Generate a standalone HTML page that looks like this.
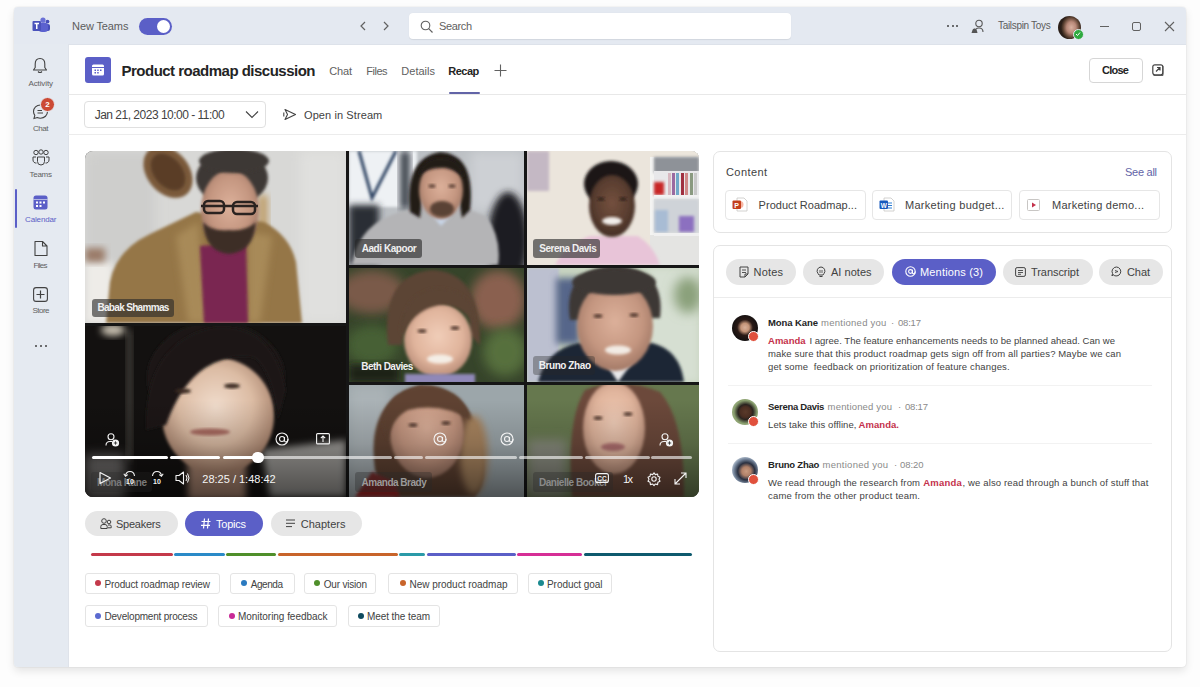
<!DOCTYPE html>
<html><head><meta charset="utf-8"><style>
html,body{margin:0;padding:0;}
body{width:1200px;height:687px;overflow:hidden;position:relative;background:#fdfdfd;font-family:"Liberation Sans",sans-serif;}
svg{overflow:visible}
</style></head><body>
<div style="position:absolute;left:14px;top:7px;width:1172px;height:660px;background:#fff;border-radius:4px;box-shadow:0 4px 8px rgba(0,0,0,0.10),0 0 1.5px rgba(0,0,0,0.14);"></div>
<div style="position:absolute;left:14px;top:7px;width:1172px;height:37px;background:#e4e9f1;border-radius:4px 4px 0 0;"></div>
<div style="position:absolute;left:14px;top:43.5px;width:1172px;height:1px;background:#dde2ea;"></div>
<div style="position:absolute;left:14px;top:44px;width:54px;height:623px;background:#e5eaf1;border-radius:0 0 0 4px;"></div>
<div style="position:absolute;left:67.5px;top:44px;width:1px;height:623px;background:#dfe3ea;"></div>
<svg style="position:absolute;left:30px;top:17px;" width="20" height="17" viewBox="0 0 20 17"><circle cx="17.5" cy="4.6" r="1.9" fill="#464eb8"/><rect x="15" y="7" width="5" height="7" rx="2" fill="#464eb8"/><circle cx="13" cy="3" r="2.6" fill="#6a70d6"/><rect x="8.5" y="5.5" width="9.5" height="9.5" rx="3.5" fill="#5b61cf"/><rect x="2.5" y="4" width="8.5" height="10" rx="1" fill="#4a52bb"/><path d="M4.5 6.5 H9 M6.75 6.5 V12" stroke="#fff" stroke-width="1.5"/></svg>
<div style="position:absolute;left:72.10px;top:21.48px;font-size:11px;line-height:1;font-weight:400;color:#5c5c5c;letter-spacing:-0.121px;white-space:pre;">New Teams</div>
<div style="position:absolute;left:139px;top:17.5px;width:33px;height:17px;background:#5b5fc7;border-radius:9px;"></div>
<div style="position:absolute;left:157px;top:19.5px;width:13px;height:13px;background:#fff;border-radius:50%;"></div>
<svg style="position:absolute;left:359px;top:21px;" width="8" height="10" viewBox="0 0 8 10"><path d="M6 1 L2 5 L6 9" stroke="#616161" stroke-width="1.2" fill="none"/></svg>
<svg style="position:absolute;left:382px;top:21px;" width="8" height="10" viewBox="0 0 8 10"><path d="M2 1 L6 5 L2 9" stroke="#616161" stroke-width="1.2" fill="none"/></svg>
<div style="position:absolute;left:409px;top:13px;width:382px;height:26px;background:#fff;border-radius:4px;box-shadow:0 0.5px 1px rgba(0,0,0,0.08);"></div>
<svg style="position:absolute;left:420px;top:19.5px;" width="14" height="14" viewBox="0 0 14 14"><circle cx="5.5" cy="5.5" r="4.3" stroke="#616161" stroke-width="1.1" fill="none"/><path d="M8.7 8.7 L12.5 12.5" stroke="#616161" stroke-width="1.2"/></svg>
<div style="position:absolute;left:439.00px;top:21.18px;font-size:11px;line-height:1;font-weight:400;color:#616161;letter-spacing:-0.372px;white-space:pre;">Search</div>
<div style="position:absolute;left:947px;top:25px;width:2px;height:2px;background:#424242;border-radius:50%;"></div>
<div style="position:absolute;left:951.5px;top:25px;width:2px;height:2px;background:#424242;border-radius:50%;"></div>
<div style="position:absolute;left:956px;top:25px;width:2px;height:2px;background:#424242;border-radius:50%;"></div>
<svg style="position:absolute;left:970px;top:19px;" width="16" height="16" viewBox="0 0 16 16"><circle cx="9" cy="4.5" r="3.2" stroke="#555" stroke-width="1.1" fill="none"/><path d="M5 13 Q5 9 9 9 Q13 9 13 13" stroke="#555" stroke-width="1.1" fill="none"/><path d="M1.5 14 L2.5 11 Q3 9 5 9.5 Q7 10 7 12 L7.5 14 Z" fill="#555"/></svg>
<div style="position:absolute;left:998.00px;top:21.33px;font-size:10px;line-height:1;font-weight:400;color:#5c5c5c;letter-spacing:-0.318px;white-space:pre;">Tailspin Toys</div>
<div style="position:absolute;left:1058px;top:15.5px;width:23px;height:23px;border-radius:50%;background:radial-gradient(ellipse 45% 55% at 58% 50%,#d8b0a0 0,#b88878 45%,#5a4030 80%,#2a1e18 100%);"></div>
<div style="position:absolute;left:1073px;top:29px;width:9px;height:9px;background:#2eaa3f;border-radius:50%;border:1px solid #e4e9f1;"></div>
<svg style="position:absolute;left:1074.5px;top:30.5px;" width="6" height="6" viewBox="0 0 6 6"><path d="M1 3 L2.5 4.5 L5 1.5" stroke="#fff" stroke-width="1" fill="none"/></svg>
<div style="position:absolute;left:1099.5px;top:25.5px;width:9px;height:1px;background:#616161;"></div>
<div style="position:absolute;left:1132px;top:21.5px;width:9px;height:9px;border:1.1px solid #616161;border-radius:2px;box-sizing:border-box;"></div>
<svg style="position:absolute;left:1164px;top:21px;" width="11" height="11" viewBox="0 0 11 11"><path d="M1 1 L10 10 M10 1 L1 10" stroke="#616161" stroke-width="1.1"/></svg>
<div style="position:absolute;left:68px;top:93.5px;width:1118px;height:1px;background:#e8e8e8;"></div>
<div style="position:absolute;left:85px;top:57px;width:26px;height:25.5px;background:#5b5fc7;border-radius:3px;"></div>
<svg style="position:absolute;left:91px;top:63px;" width="14" height="14" viewBox="0 0 14 14"><rect x="1" y="1.5" width="12" height="11" rx="1.5" fill="#fff"/><rect x="1" y="4" width="12" height="1" fill="#5b5fc7"/><g fill="#5b5fc7"><rect x="3.5" y="6.5" width="1.5" height="1.5"/><rect x="6.2" y="6.5" width="1.5" height="1.5"/><rect x="9" y="6.5" width="1.5" height="1.5"/><rect x="3.5" y="9" width="1.5" height="1.5"/><rect x="6.2" y="9" width="1.5" height="1.5"/></g></svg>
<div style="position:absolute;left:121.50px;top:63.09px;font-size:15px;line-height:1;font-weight:700;color:#242424;letter-spacing:-0.509px;white-space:pre;">Product roadmap discussion</div>
<div style="position:absolute;left:329.20px;top:65.88px;font-size:11px;line-height:1;font-weight:400;color:#616161;letter-spacing:-0.150px;white-space:pre;">Chat</div>
<div style="position:absolute;left:366.30px;top:65.88px;font-size:11px;line-height:1;font-weight:400;color:#616161;letter-spacing:-0.509px;white-space:pre;">Files</div>
<div style="position:absolute;left:401.30px;top:65.88px;font-size:11px;line-height:1;font-weight:400;color:#616161;letter-spacing:0.012px;white-space:pre;">Details</div>
<div style="position:absolute;left:448.30px;top:65.88px;font-size:11px;line-height:1;font-weight:700;color:#242424;letter-spacing:-0.533px;white-space:pre;">Recap</div>
<div style="position:absolute;left:448.5px;top:92px;width:31.5px;height:2px;background:#6264a7;border-radius:1px;"></div>
<svg style="position:absolute;left:494px;top:64px;" width="13" height="13" viewBox="0 0 13 13"><path d="M6.5 0.5 V12.5 M0.5 6.5 H12.5" stroke="#616161" stroke-width="1.1"/></svg>
<div style="position:absolute;left:1088.5px;top:57.5px;width:54px;height:25.5px;border:1px solid #d6d6d6;border-radius:4px;box-sizing:border-box;background:#fff;"></div>
<div style="position:absolute;left:1102.00px;top:65.18px;font-size:11px;line-height:1;font-weight:700;color:#242424;letter-spacing:-0.742px;white-space:pre;">Close</div>
<svg style="position:absolute;left:1152px;top:64px;" width="12" height="12" viewBox="0 0 12 12"><rect x="0.8" y="0.8" width="10" height="10" rx="2" stroke="#424242" stroke-width="1.2" fill="none"/><path d="M4 7.5 L8 3.5 M5 3.5 H8 V6.5" stroke="#424242" stroke-width="1.2" fill="none"/><path d="M1.5 11.5 H11 V2" stroke="#424242" stroke-width="0.8" fill="none"/></svg>
<div style="position:absolute;left:84px;top:101px;width:181.5px;height:26.5px;border:1px solid #e0e0e0;border-radius:4px;box-sizing:border-box;"></div>
<div style="position:absolute;left:94.70px;top:108.64px;font-size:12px;line-height:1;font-weight:400;color:#424242;letter-spacing:-0.502px;white-space:pre;">Jan 21, 2023 10:00 - 11:00</div>
<svg style="position:absolute;left:245px;top:110px;" width="14" height="9" viewBox="0 0 14 9"><path d="M1 1.5 L7 7.5 L13 1.5" stroke="#424242" stroke-width="1.1" fill="none"/></svg>
<svg style="position:absolute;left:283px;top:107.5px;" width="14" height="13" viewBox="0 0 14 13"><path d="M2 1.5 L12.5 6.5 L2 11.5 L4.5 6.5 Z M0.8 4.5 V8.5" stroke="#424242" stroke-width="1.1" fill="none" stroke-linejoin="round"/></svg>
<div style="position:absolute;left:304.00px;top:109.88px;font-size:11px;line-height:1;font-weight:400;color:#424242;letter-spacing:0.096px;white-space:pre;">Open in Stream</div>
<div style="position:absolute;left:68px;top:133.5px;width:1118px;height:1px;background:#ececec;"></div>
<svg style="position:absolute;left:32px;top:57px;" width="16" height="17" viewBox="0 0 16 17"><path d="M8 1.5 C4.5 1.5 3.2 4.2 3.2 7 V10.5 L1.5 13 H14.5 L12.8 10.5 V7 C12.8 4.2 11.5 1.5 8 1.5 Z" stroke="#424242" stroke-width="1.1" fill="none" stroke-linejoin="round"/><path d="M6 14.5 Q8 16.5 10 14.5" stroke="#424242" stroke-width="1.1" fill="none"/></svg>
<div style="position:absolute;left:28.50px;top:79.72px;font-size:8px;line-height:1;font-weight:400;color:#616161;letter-spacing:-0.121px;white-space:pre;">Activity</div>
<svg style="position:absolute;left:32px;top:103px;" width="17" height="17" viewBox="0 0 17 17"><path d="M8.5 2 C4.5 2 1.5 4.8 1.5 8.5 C1.5 10 2 11.2 2.8 12.3 L2 15.5 L5.3 14.5 C6.3 15 7.4 15.2 8.5 15.2 C12.5 15.2 15.5 12.2 15.5 8.5" stroke="#424242" stroke-width="1.1" fill="none"/><path d="M5.5 7.5 H10 M5.5 10 H11" stroke="#424242" stroke-width="1.1"/></svg>
<div style="position:absolute;left:40px;top:97px;width:13px;height:13px;border-radius:50%;background:#cc4a35;border:1px solid #e5eaf1;color:#fff;font-size:8px;font-weight:bold;line-height:13px;text-align:center;font-family:'Liberation Sans'">2</div>
<div style="position:absolute;left:33.00px;top:124.72px;font-size:8px;line-height:1;font-weight:400;color:#616161;letter-spacing:-0.469px;white-space:pre;">Chat</div>
<svg style="position:absolute;left:31.5px;top:149px;" width="18" height="17" viewBox="0 0 18 17"><circle cx="4" cy="3.5" r="2.2" stroke="#424242" stroke-width="1" fill="none"/><circle cx="9" cy="3" r="2.2" stroke="#424242" stroke-width="1" fill="none"/><circle cx="14" cy="3.5" r="2.2" stroke="#424242" stroke-width="1" fill="none"/><path d="M5.5 8 H12.5 V12.5 A3.5 3.5 0 0 1 5.5 12.5 Z" stroke="#424242" stroke-width="1" fill="none"/><path d="M4 8 H1 V11 A3 3 0 0 0 4.5 14 M14 8 H17 V11 A3 3 0 0 1 13.5 14" stroke="#424242" stroke-width="1" fill="none"/></svg>
<div style="position:absolute;left:29.50px;top:170.52px;font-size:8px;line-height:1;font-weight:400;color:#616161;letter-spacing:-0.266px;white-space:pre;">Teams</div>
<div style="position:absolute;left:15px;top:189px;width:2px;height:39px;background:#5b5fc7;border-radius:1px;"></div>
<svg style="position:absolute;left:33px;top:195px;" width="15" height="15" viewBox="0 0 15 15"><rect x="0.5" y="0.5" width="14" height="14" rx="2.5" fill="#5b5fc7"/><rect x="0.5" y="4" width="14" height="1" fill="#ebeef4" opacity="0.6"/><g fill="#fff"><rect x="3" y="6.5" width="2" height="2"/><rect x="6.5" y="6.5" width="2" height="2"/><rect x="10" y="6.5" width="2" height="2"/><rect x="3" y="10" width="2" height="2"/><rect x="6.5" y="10" width="2" height="2"/></g></svg>
<div style="position:absolute;left:25.00px;top:216.02px;font-size:8px;line-height:1;font-weight:400;color:#5b5fc7;letter-spacing:-0.138px;white-space:pre;">Calendar</div>
<svg style="position:absolute;left:34px;top:240px;" width="14" height="17" viewBox="0 0 14 17"><path d="M1 1.5 H8.5 L13 6 V15.5 H1 Z M8.5 1.5 V6 H13" stroke="#424242" stroke-width="1.1" fill="none" stroke-linejoin="round"/></svg>
<div style="position:absolute;left:33.50px;top:261.72px;font-size:8px;line-height:1;font-weight:400;color:#616161;letter-spacing:-0.723px;white-space:pre;">Files</div>
<svg style="position:absolute;left:33px;top:287px;" width="15" height="15" viewBox="0 0 15 15"><rect x="0.6" y="0.6" width="13.8" height="13.8" rx="2.5" stroke="#424242" stroke-width="1.1" fill="none"/><path d="M7.5 3.5 V11.5 M3.5 7.5 H11.5" stroke="#424242" stroke-width="1.2"/></svg>
<div style="position:absolute;left:32.50px;top:307.22px;font-size:8px;line-height:1;font-weight:400;color:#616161;letter-spacing:-0.531px;white-space:pre;">Store</div>
<div style="position:absolute;left:34.5px;top:344.5px;width:2.2px;height:2.2px;background:#424242;border-radius:50%;"></div>
<div style="position:absolute;left:39.5px;top:344.5px;width:2.2px;height:2.2px;background:#424242;border-radius:50%;"></div>
<div style="position:absolute;left:44.5px;top:344.5px;width:2.2px;height:2.2px;background:#424242;border-radius:50%;"></div>
<div style="position:absolute;left:85px;top:151px;width:614px;height:346px;border-radius:8px;overflow:hidden;background:#161616;"><svg width="614" height="346" viewBox="85 151 614 346" style="position:absolute;left:0;top:0"><defs><filter id="b1" x="-20%" y="-20%" width="140%" height="140%"><feGaussianBlur stdDeviation="1.5"/></filter><filter id="b3" x="-30%" y="-30%" width="160%" height="160%"><feGaussianBlur stdDeviation="3.5"/></filter><filter id="b6" x="-50%" y="-50%" width="200%" height="200%"><feGaussianBlur stdDeviation="6"/></filter><clipPath id="c_babak"><rect x="85" y="151" width="261" height="172"/></clipPath><clipPath id="c_mona"><rect x="85" y="326" width="261" height="171"/></clipPath><clipPath id="c_aadi"><rect x="349" y="151" width="175" height="114"/></clipPath><clipPath id="c_serena"><rect x="527" y="151" width="172" height="114"/></clipPath><clipPath id="c_beth"><rect x="349" y="268" width="175" height="114"/></clipPath><clipPath id="c_bruno"><rect x="527" y="268" width="172" height="114"/></clipPath><clipPath id="c_amanda"><rect x="349" y="385" width="175" height="112"/></clipPath><clipPath id="c_dan"><rect x="527" y="385" width="172" height="112"/></clipPath><linearGradient id="shade" x1="0" y1="0" x2="0" y2="1"><stop offset="0" stop-color="#000" stop-opacity="0"/><stop offset="0.45" stop-color="#000" stop-opacity="0.15"/><stop offset="1" stop-color="#000" stop-opacity="0.5"/></linearGradient><radialGradient id="fMona" cx="0.48" cy="0.42" r="0.6"><stop offset="0" stop-color="#f0dccc"/><stop offset="0.55" stop-color="#dcbca4"/><stop offset="1" stop-color="#a07a64"/></radialGradient>
<radialGradient id="fBeth" cx="0.5" cy="0.45" r="0.6"><stop offset="0" stop-color="#f0cdb8"/><stop offset="0.6" stop-color="#e0b49c"/><stop offset="1" stop-color="#b08470"/></radialGradient>
<radialGradient id="fMid" cx="0.5" cy="0.45" r="0.6"><stop offset="0" stop-color="#dcb09a"/><stop offset="0.6" stop-color="#c49680"/><stop offset="1" stop-color="#9a7260"/></radialGradient>
<radialGradient id="fDark" cx="0.5" cy="0.45" r="0.6"><stop offset="0" stop-color="#74503e"/><stop offset="0.6" stop-color="#5a3e30"/><stop offset="1" stop-color="#3e2a22"/></radialGradient></defs><g clip-path="url(#c_babak)">
<rect x="85" y="151" width="261" height="172" fill="#d8d8d6"/>
<rect x="85" y="151" width="70" height="172" fill="#cececc" filter="url(#b6)"/>
<rect x="300" y="151" width="46" height="172" fill="#e0e0de" filter="url(#b6)"/>
<ellipse cx="168" cy="172" rx="21" ry="29" fill="#7a5a3a" transform="rotate(-40 168 172)" filter="url(#b1)"/>
<ellipse cx="168" cy="172" rx="14" ry="21" fill="#5a3e28" transform="rotate(-40 168 172)" filter="url(#b1)"/>
<rect x="85" y="262" width="28" height="61" fill="#eeece8" filter="url(#b3)"/>
<rect x="85" y="248" width="20" height="14" fill="#9a7a68" filter="url(#b3)"/>
<rect x="258" y="195" width="10" height="60" fill="#c0a070" filter="url(#b3)"/>
<path d="M106 323 L110 282 Q116 250 150 234 L196 212 L264 222 Q290 236 296 262 L302 323 Z" fill="#957647" filter="url(#b1)"/>
<path d="M176 236 L198 222 L208 323 L188 323 Z" fill="#a88a58" filter="url(#b3)"/>
<path d="M248 232 L272 236 L260 323 L248 323 Z" fill="#a88a58" filter="url(#b3)"/>
<path d="M200 246 L246 242 L248 323 L204 323 Z" fill="#7a2651" filter="url(#b1)"/>
<ellipse cx="232" cy="178" rx="36" ry="27" fill="#3e3834" filter="url(#b1)"/>
<ellipse cx="230" cy="210" rx="29" ry="40" fill="url(#fMid)" filter="url(#b1)"/>
<ellipse cx="234" cy="161" rx="35" ry="12" fill="#3e3834" filter="url(#b1)"/>
<path d="M203 222 Q205 252 229 254 Q254 252 256 222 Q245 232 229 230 Q212 232 203 222 Z" fill="#3c2e28" filter="url(#b1)"/>
<path d="M201 206 H258" stroke="#2a2220" stroke-width="2.5"/>
<rect x="204" y="201" width="20" height="12" rx="4" fill="none" stroke="#2a2220" stroke-width="2.5"/>
<rect x="233" y="202" width="22" height="12" rx="4" fill="none" stroke="#2a2220" stroke-width="2.5"/>
</g><g clip-path="url(#c_mona)">
<rect x="85" y="326" width="261" height="171" fill="#131110"/>
<rect x="127" y="330" width="5" height="130" fill="#4a4642" filter="url(#b3)"/>
<ellipse cx="113" cy="330" rx="12" ry="6" fill="#c8c0b0" filter="url(#b3)"/>
<path d="M262 450 L346 440 L346 497 L270 497 Z" fill="#9a9894" filter="url(#b3)"/>
<rect x="85" y="455" width="40" height="45" fill="#6a6866" filter="url(#b6)"/>
<ellipse cx="216" cy="378" rx="69" ry="56" fill="#1d1713" filter="url(#b1)"/>
<rect x="188" y="455" width="58" height="45" fill="#a88470" filter="url(#b3)"/>
<ellipse cx="218" cy="416" rx="56" ry="58" fill="url(#fMona)" filter="url(#b1)"/>
<path d="M146 430 Q144 345 210 328 Q272 320 286 390 L278 420 Q272 372 255 358 Q232 352 205 368 Q180 385 166 425 Z" fill="#1d1713" filter="url(#b1)"/>
<ellipse cx="183" cy="391" rx="8" ry="2.5" fill="#3a2a22" filter="url(#b1)"/>
<ellipse cx="232" cy="386" rx="8" ry="2.5" fill="#3a2a22" filter="url(#b1)"/>
<ellipse cx="210" cy="432" rx="20" ry="3.5" fill="#a86a60" filter="url(#b1)"/>
</g><g clip-path="url(#c_aadi)">
<rect x="349" y="151" width="175" height="114" fill="#bcc0c4"/>
<rect x="470" y="151" width="54" height="60" fill="#cdd0d4" filter="url(#b6)"/>
<rect x="349" y="151" width="68" height="56" fill="#eef1f4" filter="url(#b1)"/>
<path d="M359 151 L372 198 L396 151" stroke="#2c4060" stroke-width="3" fill="none" filter="url(#b1)"/>
<rect x="349" y="205" width="30" height="60" fill="#2c2e34" filter="url(#b3)"/>
<rect x="400" y="151" width="10" height="58" fill="#3a4048" filter="url(#b3)"/>
<ellipse cx="508" cy="240" rx="20" ry="48" fill="#1e1e22" filter="url(#b3)"/>
<path d="M352 265 Q358 224 400 212 L425 206 L460 206 L486 216 Q502 238 498 265 Z" fill="#b4b4b6" filter="url(#b1)"/>
<path d="M424 206 L441 226 L460 206 Z" fill="#c8d4e6" filter="url(#b1)"/>
<path d="M410 212 Q404 158 440 152 Q476 154 470 210 L462 218 L456 180 Q440 172 424 180 L420 218 Z" fill="#201a16" filter="url(#b1)"/>
<ellipse cx="441" cy="190" rx="22" ry="29" fill="url(#fMid)" filter="url(#b1)"/>
<path d="M418 176 Q424 156 442 158 Q462 158 464 178 Q450 166 440 168 Q428 168 418 176 Z" fill="#201a16" filter="url(#b1)"/>
<ellipse cx="442" cy="209" rx="12" ry="8" fill="#5a4236" filter="url(#b1)"/><ellipse cx="432" cy="186" rx="3.5" ry="1.5" fill="#4a3028" filter="url(#b1)"/><ellipse cx="452" cy="186" rx="3.5" ry="1.5" fill="#4a3028" filter="url(#b1)"/>
</g><g clip-path="url(#c_serena)">
<rect x="527" y="151" width="172" height="114" fill="#ebe5dc"/>
<rect x="527" y="151" width="22" height="40" fill="#c4b8c4" filter="url(#b1)"/>
<rect x="650" y="151" width="49" height="114" fill="#e4e4e2"/>
<rect x="650" y="151" width="49" height="6" fill="#ece6dc"/>
<rect x="650" y="157" width="4" height="78" fill="#f4f4f2"/>
<rect x="654" y="157" width="45" height="16" fill="#8e9298" filter="url(#b1)"/>
<rect x="654" y="171" width="45" height="24" fill="#e8e8ea"/>
<rect x="654" y="182" width="10" height="13" fill="#c82828" filter="url(#b1)"/>
<rect x="668" y="173" width="3" height="22" fill="#d8b8c0"/><rect x="672" y="173" width="3" height="22" fill="#9a6aa0"/><rect x="676" y="173" width="3" height="22" fill="#70a8c8"/><rect x="681" y="173" width="3" height="22" fill="#a03040"/><rect x="685" y="173" width="3" height="22" fill="#d08888"/><rect x="690" y="173" width="3" height="22" fill="#8a9a80"/><rect x="694" y="173" width="3" height="22" fill="#c8c8c8"/>
<rect x="654" y="195" width="45" height="4" fill="#f2f2f2"/>
<rect x="654" y="199" width="45" height="34" fill="#cfd3d8" filter="url(#b1)"/>
<rect x="655" y="210" width="13" height="22" fill="#a8bcd4" filter="url(#b1)"/>
<rect x="679" y="216" width="15" height="16" fill="#8c70c0" filter="url(#b1)"/>
<rect x="654" y="233" width="45" height="3" fill="#f0f0f0"/>
<path d="M555 265 Q566 244 590 236 L638 236 Q654 246 660 265 Z" fill="#e8c4d8" filter="url(#b1)"/>
<ellipse cx="611" cy="184" rx="27" ry="23" fill="#1c1614" filter="url(#b1)"/>
<ellipse cx="612" cy="206" rx="23" ry="31" fill="url(#fDark)" filter="url(#b1)"/>
<ellipse cx="612" cy="221" rx="10" ry="4" fill="#f2eeea" filter="url(#b1)"/><ellipse cx="601" cy="199" rx="3.5" ry="1.5" fill="#2a1a14" filter="url(#b1)"/><ellipse cx="623" cy="199" rx="3.5" ry="1.5" fill="#2a1a14" filter="url(#b1)"/>
</g><g clip-path="url(#c_beth)">
<rect x="349" y="268" width="175" height="114" fill="#36442a"/>
<ellipse cx="372" cy="292" rx="34" ry="22" fill="#7a5a48" filter="url(#b6)"/>
<ellipse cx="498" cy="300" rx="28" ry="30" fill="#8a6050" filter="url(#b6)"/>
<ellipse cx="372" cy="345" rx="26" ry="20" fill="#466034" filter="url(#b6)"/>
<rect x="349" y="365" width="50" height="17" fill="#1e2418" filter="url(#b3)"/>
<ellipse cx="505" cy="352" rx="22" ry="24" fill="#56703e" filter="url(#b6)"/>
<path d="M388 345 Q380 275 432 270 Q482 272 480 345 L470 335 L470 310 Q440 295 405 315 L402 345 Z" fill="#5c4434" filter="url(#b1)"/>
<ellipse cx="438" cy="340" rx="34" ry="37" fill="url(#fBeth)" filter="url(#b1)"/>
<path d="M400 330 Q405 290 440 288 Q475 292 474 322 Q455 300 435 306 Q412 312 403 336 Z" fill="#5c4434" filter="url(#b1)"/>
<ellipse cx="440" cy="359" rx="13" ry="4.5" fill="#f4eee6" filter="url(#b1)"/><ellipse cx="422" cy="331" rx="4.5" ry="1.8" fill="#4a3028" filter="url(#b1)"/><ellipse cx="455" cy="328" rx="4.5" ry="1.8" fill="#4a3028" filter="url(#b1)"/>
<rect x="405" y="374" width="70" height="10" fill="#9088b8" filter="url(#b1)"/>
</g><g clip-path="url(#c_bruno)">
<rect x="527" y="268" width="172" height="114" fill="#c8d4c0"/>
<rect x="527" y="268" width="32" height="114" fill="#bcc0d0" filter="url(#b1)"/>
<rect x="556" y="278" width="24" height="66" fill="#56668a" filter="url(#b3)"/>
<rect x="648" y="268" width="51" height="114" fill="#d6dfd2" filter="url(#b3)"/>
<ellipse cx="688" cy="295" rx="14" ry="18" fill="#8aa07a" filter="url(#b6)"/>
<path d="M538 382 Q546 350 578 343 L652 343 Q680 350 684 382 Z" fill="#1e2636" filter="url(#b1)"/>
<path d="M598 352 L618 382 L640 352 Z" fill="#e8e8ea" filter="url(#b1)"/>
<path d="M570 320 Q562 268 615 266 Q666 268 660 318 Z" fill="#3e3836" filter="url(#b1)"/>
<ellipse cx="615" cy="326" rx="38" ry="45" fill="url(#fMid)" filter="url(#b1)"/>
<ellipse cx="614" cy="282" rx="42" ry="13" fill="#3e3836" filter="url(#b1)"/>
<ellipse cx="618" cy="350" rx="13" ry="4.5" fill="#f2ebe4" filter="url(#b1)"/><ellipse cx="598" cy="316" rx="4.5" ry="1.8" fill="#4a3028" filter="url(#b1)"/><ellipse cx="634" cy="315" rx="4.5" ry="1.8" fill="#4a3028" filter="url(#b1)"/>
</g><g clip-path="url(#c_amanda)">
<rect x="349" y="385" width="175" height="112" fill="#9ca6aa"/>
<rect x="349" y="385" width="40" height="112" fill="#aab2b6" filter="url(#b6)"/>
<path d="M375 470 Q365 400 420 385 Q470 388 480 440 Q490 480 475 497 L400 497 Q380 490 375 470 Z" fill="#5e4232" filter="url(#b1)"/>
<ellipse cx="474" cy="455" rx="14" ry="40" fill="#a8845e" filter="url(#b3)"/>
<ellipse cx="427" cy="433" rx="37" ry="45" fill="url(#fMid)" filter="url(#b1)"/>
<path d="M382 425 Q386 385 432 386 Q466 392 470 420 Q442 402 408 410 Q392 418 388 440 Z" fill="#5e4232" filter="url(#b1)"/>
<path d="M355 497 L372 472 L395 482 L400 497 Z" fill="#a02828" filter="url(#b1)"/><ellipse cx="413" cy="425" rx="4.5" ry="1.8" fill="#4a3028" filter="url(#b1)"/><ellipse cx="446" cy="423" rx="4.5" ry="1.8" fill="#4a3028" filter="url(#b1)"/>
</g><g clip-path="url(#c_dan)">
<rect x="527" y="385" width="172" height="112" fill="#66784e"/>
<rect x="527" y="440" width="40" height="57" fill="#8a8c80" filter="url(#b6)"/>
<path d="M572 497 Q566 420 585 390 Q620 375 660 392 Q685 420 684 497 Z" fill="#6c4a3a" filter="url(#b1)"/>
<ellipse cx="614" cy="428" rx="31" ry="46" fill="url(#fBeth)" filter="url(#b1)"/>
<ellipse cx="613" cy="447" rx="12" ry="4" fill="#b07070" filter="url(#b1)"/><ellipse cx="598" cy="418" rx="4.5" ry="1.8" fill="#4a3028" filter="url(#b1)"/><ellipse cx="628" cy="414" rx="4.5" ry="1.8" fill="#4a3028" filter="url(#b1)"/>
</g><rect x="85" y="400" width="614" height="97" fill="url(#shade)"/></svg></div>
<div style="position:absolute;left:91.7px;top:298.5px;width:82.8px;height:18.0px;background:rgba(40,40,40,0.62);border-radius:3px;"></div>
<div style="position:absolute;left:97.40px;top:303.13px;font-size:10px;line-height:1;font-weight:700;color:#f0f0f0;letter-spacing:-0.671px;white-space:pre;">Babak Shammas</div>
<div style="position:absolute;left:355px;top:239.3px;width:66.69999999999999px;height:19.0px;background:rgba(40,40,40,0.62);border-radius:3px;"></div>
<div style="position:absolute;left:361.70px;top:244.03px;font-size:10px;line-height:1;font-weight:700;color:#f0f0f0;letter-spacing:-0.445px;white-space:pre;">Aadi Kapoor</div>
<div style="position:absolute;left:533.3px;top:239.3px;width:66.70000000000005px;height:19.0px;background:rgba(40,40,40,0.62);border-radius:3px;"></div>
<div style="position:absolute;left:539.30px;top:244.03px;font-size:10px;line-height:1;font-weight:700;color:#f0f0f0;letter-spacing:-0.493px;white-space:pre;">Serena Davis</div>
<div style="position:absolute;left:361.30px;top:361.53px;font-size:10px;line-height:1;font-weight:700;color:#f0f0f0;letter-spacing:-0.525px;white-space:pre;">Beth Davies</div>
<div style="position:absolute;left:533px;top:356px;width:61.700000000000045px;height:18.69999999999999px;background:rgba(40,40,40,0.35);border-radius:3px;"></div>
<div style="position:absolute;left:538.70px;top:361.03px;font-size:10px;line-height:1;font-weight:700;color:#f0f0f0;letter-spacing:-0.423px;white-space:pre;">Bruno Zhao</div>
<div style="position:absolute;left:354.7px;top:471.7px;width:77.30000000000001px;height:20.30000000000001px;background:rgba(40,40,40,0.35);border-radius:3px;"></div>
<div style="position:absolute;left:361.60px;top:477.53px;font-size:10px;line-height:1;font-weight:700;color:#9a9a9a;letter-spacing:-0.498px;white-space:pre;">Amanda Brady</div>
<div style="position:absolute;left:533px;top:471.7px;width:80px;height:20.30000000000001px;background:rgba(40,40,40,0.35);border-radius:3px;"></div>
<div style="position:absolute;left:539.00px;top:477.53px;font-size:10px;line-height:1;font-weight:700;color:#8a8a8a;letter-spacing:-0.471px;white-space:pre;">Danielle Booker</div>
<div style="position:absolute;left:91px;top:471.7px;width:61px;height:20.30000000000001px;background:rgba(40,40,40,0.3);border-radius:3px;"></div>
<div style="position:absolute;left:97.00px;top:477.53px;font-size:10px;line-height:1;font-weight:700;color:#7a7a7a;letter-spacing:-0.418px;white-space:pre;">Mona Kane</div>
<div style="position:absolute;left:91.6px;top:455.5px;width:76.4px;height:3px;background:#fff;border-radius:1.5px;"></div>
<div style="position:absolute;left:170.3px;top:455.5px;width:49.89999999999998px;height:3px;background:#fff;border-radius:1.5px;"></div>
<div style="position:absolute;left:222.8px;top:455.5px;width:34.89999999999998px;height:3px;background:#fff;border-radius:1.5px;"></div>
<div style="position:absolute;left:257.7px;top:455.5px;width:134.3px;height:3px;background:rgba(255,255,255,0.6);border-radius:1.5px;"></div>
<div style="position:absolute;left:393.5px;top:455.5px;width:29.5px;height:3px;background:rgba(255,255,255,0.6);border-radius:1.5px;"></div>
<div style="position:absolute;left:424.5px;top:455.5px;width:92.79999999999995px;height:3px;background:rgba(255,255,255,0.6);border-radius:1.5px;"></div>
<div style="position:absolute;left:518.8px;top:455.5px;width:64.70000000000005px;height:3px;background:rgba(255,255,255,0.6);border-radius:1.5px;"></div>
<div style="position:absolute;left:585px;top:455.5px;width:64.70000000000005px;height:3px;background:rgba(255,255,255,0.6);border-radius:1.5px;"></div>
<div style="position:absolute;left:651.2px;top:455.5px;width:40.59999999999991px;height:3px;background:rgba(255,255,255,0.6);border-radius:1.5px;"></div>
<div style="position:absolute;left:252px;top:451.5px;width:11.5px;height:11.5px;background:#fff;border-radius:50%;"></div>
<svg style="position:absolute;left:104.5px;top:432.5px;" width="15" height="14" viewBox="0 0 15 14"><circle cx="6" cy="3.8" r="3" stroke="#f4f4f4" stroke-width="1.1" fill="none"/><path d="M1 12.5 Q1 8.5 5 8.5 H7" stroke="#f4f4f4" stroke-width="1.1" fill="none"/><circle cx="10.5" cy="10" r="3.6" fill="#f4f4f4"/><path d="M10.5 8.3 V11.7 M8.8 10 H12.2" stroke="#333" stroke-width="0.9"/></svg>
<svg style="position:absolute;left:275px;top:432px;" width="14" height="14" viewBox="0 0 14 14"><circle cx="7" cy="7" r="6" stroke="#f4f4f4" stroke-width="1.1" fill="none"/><circle cx="7" cy="7" r="2.5" stroke="#f4f4f4" stroke-width="1.1" fill="none"/><path d="M9.5 5 V8.5 Q9.5 10 11 10 Q13 10 13 7" stroke="#f4f4f4" stroke-width="1.1" fill="none"/></svg>
<svg style="position:absolute;left:316px;top:432.5px;" width="14" height="12" viewBox="0 0 14 12"><rect x="0.6" y="0.6" width="12.8" height="10.3" rx="1" stroke="#f4f4f4" stroke-width="1.1" fill="none"/><path d="M7 9 V3.2 M4.8 5.2 L7 3 L9.2 5.2" stroke="#f4f4f4" stroke-width="1.1" fill="none"/></svg>
<svg style="position:absolute;left:433px;top:432px;" width="14" height="14" viewBox="0 0 14 14"><circle cx="7" cy="7" r="6" stroke="#f4f4f4" stroke-width="1.1" fill="none"/><circle cx="7" cy="7" r="2.5" stroke="#f4f4f4" stroke-width="1.1" fill="none"/><path d="M9.5 5 V8.5 Q9.5 10 11 10 Q13 10 13 7" stroke="#f4f4f4" stroke-width="1.1" fill="none"/></svg>
<svg style="position:absolute;left:499.5px;top:432px;" width="14" height="14" viewBox="0 0 14 14"><circle cx="7" cy="7" r="6" stroke="#f4f4f4" stroke-width="1.1" fill="none"/><circle cx="7" cy="7" r="2.5" stroke="#f4f4f4" stroke-width="1.1" fill="none"/><path d="M9.5 5 V8.5 Q9.5 10 11 10 Q13 10 13 7" stroke="#f4f4f4" stroke-width="1.1" fill="none"/></svg>
<svg style="position:absolute;left:659px;top:432.5px;" width="15" height="14" viewBox="0 0 15 14"><circle cx="6" cy="3.8" r="3" stroke="#f4f4f4" stroke-width="1.1" fill="none"/><path d="M1 12.5 Q1 8.5 5 8.5 H7" stroke="#f4f4f4" stroke-width="1.1" fill="none"/><circle cx="10.5" cy="10" r="3.6" fill="#f4f4f4"/><path d="M10.5 8.3 V11.7 M8.8 10 H12.2" stroke="#333" stroke-width="0.9"/></svg>
<svg style="position:absolute;left:98px;top:471px;" width="14" height="14" viewBox="0 0 14 14"><path d="M2 1.5 L12.5 7 L2 12.5 Z" stroke="#f4f4f4" stroke-width="1.2" fill="none" stroke-linejoin="round"/></svg>
<svg style="position:absolute;left:123px;top:470px;" width="14" height="15" viewBox="0 0 14 15"><path d="M2.5 6 Q3 1.5 7 1.5 Q11 1.5 11.5 6" stroke="#f4f4f4" stroke-width="1.1" fill="none"/><path d="M0.8 3.8 L2.5 6.2 L4.8 4.6" stroke="#f4f4f4" stroke-width="1.1" fill="none"/><text x="7" y="14" font-size="7" font-weight="bold" fill="#f4f4f4" text-anchor="middle" font-family="Liberation Sans">10</text></svg>
<svg style="position:absolute;left:149.5px;top:470px;" width="14" height="15" viewBox="0 0 14 15"><path d="M2.5 6 Q3 1.5 7 1.5 Q11 1.5 11.5 6" stroke="#f4f4f4" stroke-width="1.1" fill="none"/><path d="M13.2 3.8 L11.5 6.2 L9.2 4.6" stroke="#f4f4f4" stroke-width="1.1" fill="none"/><text x="7" y="14" font-size="7" font-weight="bold" fill="#f4f4f4" text-anchor="middle" font-family="Liberation Sans">10</text></svg>
<svg style="position:absolute;left:175px;top:471px;" width="15" height="14" viewBox="0 0 15 14"><path d="M1 4.5 H4 L8.5 1 V13 L4 9.5 H1 Z" stroke="#f4f4f4" stroke-width="1.1" fill="none" stroke-linejoin="round"/><path d="M11 4 Q13 7 11 10 M12.5 2.5 Q15.5 7 12.5 11.5" stroke="#f4f4f4" stroke-width="1" fill="none"/></svg>
<div style="position:absolute;left:202.30px;top:473.68px;font-size:11px;line-height:1;font-weight:400;color:#f4f4f4;letter-spacing:-0.000px;white-space:pre;">28:25 / 1:48:42</div>
<svg style="position:absolute;left:595px;top:473px;" width="14" height="10" viewBox="0 0 14 10"><rect x="0.6" y="0.6" width="12.8" height="8.8" rx="2" stroke="#f4f4f4" stroke-width="1.1" fill="none"/><text x="7" y="7.6" font-size="6.5" font-weight="bold" fill="#f4f4f4" text-anchor="middle" font-family="Liberation Sans">CC</text></svg>
<div style="position:absolute;left:623.00px;top:473.68px;font-size:11px;line-height:1;font-weight:400;color:#f4f4f4;letter-spacing:-1.625px;white-space:pre;">1x</div>
<svg style="position:absolute;left:646.5px;top:471.5px;" width="14" height="14" viewBox="0 0 14 14"><circle cx="7" cy="7" r="2.2" stroke="#f4f4f4" stroke-width="1.1" fill="none"/><path d="M7 0.8 L8.3 2.6 L10.6 2 L10.9 4.3 L13 5.3 L12 7.3 L13 9.3 L10.9 10.3 L10.6 12.6 L8.3 12 L7 13.6 L5.7 12 L3.4 12.6 L3.1 10.3 L1 9.3 L2 7.3 L1 5.3 L3.1 4.3 L3.4 2 L5.7 2.6 Z" stroke="#f4f4f4" stroke-width="1.1" fill="none" stroke-linejoin="round"/></svg>
<svg style="position:absolute;left:674px;top:471.5px;" width="13" height="13" viewBox="0 0 13 13"><path d="M1 12 L12 1 M7 1 H12 V6 M1 7 V12 H6" stroke="#f4f4f4" stroke-width="1.1" fill="none"/></svg>
<div style="position:absolute;left:712.5px;top:151px;width:459px;height:82px;border:1px solid #e4e4e4;border-radius:7px;box-sizing:border-box;background:#fff;"></div>
<div style="position:absolute;left:726.00px;top:167.48px;font-size:11px;line-height:1;font-weight:400;color:#424242;letter-spacing:0.411px;white-space:pre;">Content</div>
<div style="position:absolute;left:1125.00px;top:167.48px;font-size:11px;line-height:1;font-weight:400;color:#6264a7;letter-spacing:-0.273px;white-space:pre;">See all</div>
<div style="position:absolute;left:725px;top:190px;width:141px;height:29.5px;border:1px solid #e6e6e6;border-radius:4px;box-sizing:border-box;background:#fff;"></div>
<svg style="position:absolute;left:732px;top:197px" width="16" height="15" viewBox="0 0 16 15"><path d="M5 1 H12 L15 4 V14 H5 Z" fill="#fff" stroke="#c8c6c4" stroke-width="0.8"/><circle cx="8" cy="7.5" r="3.5" fill="#ed6c47" opacity="0.5"/><rect x="0.5" y="3.5" width="8.5" height="8.5" rx="1" fill="#c43e1c"/><text x="4.7" y="10.5" font-size="7" font-weight="bold" fill="#fff" text-anchor="middle" font-family="Liberation Sans">P</text></svg>
<div style="position:absolute;left:758.60px;top:200.48px;font-size:11px;line-height:1;font-weight:400;color:#424242;letter-spacing:0.033px;white-space:pre;">Product Roadmap...</div>
<div style="position:absolute;left:872px;top:190px;width:140.39999999999998px;height:29.5px;border:1px solid #e6e6e6;border-radius:4px;box-sizing:border-box;background:#fff;"></div>
<svg style="position:absolute;left:879px;top:197px" width="16" height="15" viewBox="0 0 16 15"><path d="M5 1 H12 L15 4 V14 H5 Z" fill="#fff" stroke="#c8c6c4" stroke-width="0.8"/><path d="M9 6 H13 M9 8.5 H13 M9 11 H13" stroke="#2b7cd3" stroke-width="1"/><rect x="0.5" y="3.5" width="8.5" height="8.5" rx="1" fill="#185abd"/><text x="4.7" y="10.5" font-size="6.5" font-weight="bold" fill="#fff" text-anchor="middle" font-family="Liberation Sans">W</text></svg>
<div style="position:absolute;left:905.00px;top:200.48px;font-size:11px;line-height:1;font-weight:400;color:#424242;letter-spacing:0.290px;white-space:pre;">Marketing budget...</div>
<div style="position:absolute;left:1019px;top:190px;width:140.5999999999999px;height:29.5px;border:1px solid #e6e6e6;border-radius:4px;box-sizing:border-box;background:#fff;"></div>
<svg style="position:absolute;left:1027px;top:199px" width="13" height="12" viewBox="0 0 13 12"><rect x="0.5" y="0.5" width="12" height="11" rx="1" fill="#fff" stroke="#c8c6c4" stroke-width="1"/><path d="M5 3.5 L9 6 L5 8.5 Z" fill="#c4314b"/></svg>
<div style="position:absolute;left:1052.00px;top:200.48px;font-size:11px;line-height:1;font-weight:400;color:#424242;letter-spacing:0.247px;white-space:pre;">Marketing demo...</div>
<div style="position:absolute;left:712.5px;top:245px;width:459px;height:407px;border:1px solid #e4e4e4;border-radius:7px;box-sizing:border-box;background:#fff;"></div>
<div style="position:absolute;left:725.6px;top:259px;width:70.79999999999995px;height:25.5px;background:#e6e6e6;border-radius:13px;"></div>
<svg style="position:absolute;left:739px;top:265.5px;" width="10" height="12" viewBox="0 0 10 12"><path d="M1 1 H9 V8 L6 11 H1 Z M6 11 V8 H9" stroke="#424242" stroke-width="1" fill="none" stroke-linejoin="round"/><path d="M3 4 H7 M3 6.5 H7" stroke="#424242" stroke-width="0.9"/></svg>
<div style="position:absolute;left:753.60px;top:266.88px;font-size:11px;line-height:1;font-weight:400;color:#424242;letter-spacing:0.162px;white-space:pre;">Notes</div>
<div style="position:absolute;left:803px;top:259px;width:81.39999999999998px;height:25.5px;background:#e6e6e6;border-radius:13px;"></div>
<svg style="position:absolute;left:815.5px;top:265.5px;" width="10" height="12" viewBox="0 0 10 12"><path d="M5 1 A4 4 0 0 1 8 7.5 L7 9 H3 L2 7.5 A4 4 0 0 1 5 1 Z M3.5 10.5 H6.5" stroke="#424242" stroke-width="1" fill="none"/><path d="M4 4 V7 M6 4 V7" stroke="#424242" stroke-width="0.8"/></svg>
<div style="position:absolute;left:831.00px;top:266.88px;font-size:11px;line-height:1;font-weight:400;color:#424242;letter-spacing:0.034px;white-space:pre;">AI notes</div>
<div style="position:absolute;left:892px;top:259px;width:104px;height:25.5px;background:#5b5fc7;border-radius:13px;"></div>
<svg style="position:absolute;left:904.5px;top:266px;" width="11" height="11" viewBox="0 0 11 11"><circle cx="5.5" cy="5.5" r="4.7" stroke="#fff" stroke-width="1.1" fill="none"/><circle cx="5.5" cy="5.5" r="1.9" stroke="#fff" stroke-width="1.1" fill="none"/><path d="M7.4 3.8 V6.5 Q7.4 7.8 8.6 7.8 Q10.2 7.8 10.2 5.5" stroke="#fff" stroke-width="1.1" fill="none"/></svg>
<div style="position:absolute;left:920.00px;top:266.88px;font-size:11px;line-height:1;font-weight:400;color:#fff;letter-spacing:0.169px;white-space:pre;">Mentions (3)</div>
<div style="position:absolute;left:1003px;top:259px;width:89.70000000000005px;height:25.5px;background:#e6e6e6;border-radius:13px;"></div>
<svg style="position:absolute;left:1015px;top:266.5px;" width="11" height="10" viewBox="0 0 11 10"><rect x="0.6" y="0.6" width="9.8" height="8.8" rx="1.5" stroke="#424242" stroke-width="1" fill="none"/><path d="M3 3.5 H8 M3 5.5 H8 M3 7.3 H6" stroke="#424242" stroke-width="0.9"/></svg>
<div style="position:absolute;left:1031.00px;top:266.88px;font-size:11px;line-height:1;font-weight:400;color:#424242;letter-spacing:-0.056px;white-space:pre;">Transcript</div>
<div style="position:absolute;left:1099.4px;top:259px;width:63.399999999999864px;height:25.5px;background:#e6e6e6;border-radius:13px;"></div>
<svg style="position:absolute;left:1111px;top:265.5px;" width="11" height="11" viewBox="0 0 11 11"><path d="M5.5 1 A4.5 4.5 0 1 1 2 8.6 L1 10 L1.5 7.5 A4.5 4.5 0 0 1 5.5 1 Z" stroke="#424242" stroke-width="1" fill="none"/><path d="M4 4.5 L7 5.5 L4 6.5" stroke="#424242" stroke-width="0.9" fill="none"/></svg>
<div style="position:absolute;left:1127.00px;top:266.88px;font-size:11px;line-height:1;font-weight:400;color:#424242;letter-spacing:-0.083px;white-space:pre;">Chat</div>
<div style="position:absolute;left:713.5px;top:297px;width:457px;height:1px;background:#ececec;"></div>
<div style="position:absolute;left:732px;top:314.5px;width:26px;height:26px;border-radius:50%;background:radial-gradient(circle at 50% 48%,#d8b09a 0,#c49478 22%,#2a1a16 42%,#141010 70%);"></div>
<div style="position:absolute;left:748px;top:331.0px;width:11px;height:11px;background:#e0503c;border-radius:50%;border:1px solid #fff;box-sizing:border-box;"></div>
<div style="position:absolute;left:768.00px;top:317.95px;font-size:9.5px;line-height:1;font-weight:700;color:#242424;letter-spacing:-0.086px;white-space:pre;">Mona Kane</div>
<div style="position:absolute;left:821.00px;top:317.95px;font-size:9.5px;line-height:1;font-weight:400;color:#8a8a8a;letter-spacing:0.256px;white-space:pre;">mentioned you</div>
<div style="position:absolute;left:891.00px;top:317.95px;font-size:9.5px;line-height:1;font-weight:400;color:#8a8a8a;letter-spacing:-1.172px;white-space:pre;">·</div>
<div style="position:absolute;left:898.00px;top:317.95px;font-size:9.5px;line-height:1;font-weight:400;color:#8a8a8a;letter-spacing:-0.195px;white-space:pre;">08:17</div>
<div style="position:absolute;left:809.40px;top:335.95px;font-size:9.5px;line-height:1;font-weight:400;color:#424242;letter-spacing:0.031px;white-space:pre;">I agree. The feature enhancements needs to be planned ahead. Can we</div>
<div style="position:absolute;left:768.00px;top:335.95px;font-size:9.5px;line-height:1;font-weight:700;color:#c4314b;letter-spacing:0.023px;white-space:pre;">Amanda</div>
<div style="position:absolute;left:768.00px;top:348.95px;font-size:9.5px;line-height:1;font-weight:400;color:#424242;letter-spacing:0.133px;white-space:pre;">make sure that this product roadmap gets sign off from all parties? Maybe we can</div>
<div style="position:absolute;left:768.00px;top:361.95px;font-size:9.5px;line-height:1;font-weight:400;color:#424242;letter-spacing:0.139px;white-space:pre;">get some  feedback on prioritization of feature changes.</div>
<div style="position:absolute;left:728px;top:385px;width:424px;height:1px;background:#f2f2f2;"></div>
<div style="position:absolute;left:732px;top:399px;width:26px;height:26px;border-radius:50%;background:radial-gradient(circle at 52% 50%,#5a3a2a 0,#4a2e22 28%,#2a2420 40%,#8aa070 62%,#a0b080 80%);"></div>
<div style="position:absolute;left:748px;top:415.5px;width:11px;height:11px;background:#e0503c;border-radius:50%;border:1px solid #fff;box-sizing:border-box;"></div>
<div style="position:absolute;left:768.00px;top:402.45px;font-size:9.5px;line-height:1;font-weight:700;color:#242424;letter-spacing:-0.299px;white-space:pre;">Serena Davis</div>
<div style="position:absolute;left:827.60px;top:402.45px;font-size:9.5px;line-height:1;font-weight:400;color:#8a8a8a;letter-spacing:0.173px;white-space:pre;">mentioned you</div>
<div style="position:absolute;left:898.00px;top:402.45px;font-size:9.5px;line-height:1;font-weight:400;color:#8a8a8a;letter-spacing:-1.172px;white-space:pre;">·</div>
<div style="position:absolute;left:905.00px;top:402.45px;font-size:9.5px;line-height:1;font-weight:400;color:#8a8a8a;letter-spacing:-0.195px;white-space:pre;">08:17</div>
<div style="position:absolute;left:768.00px;top:420.45px;font-size:9.5px;line-height:1;font-weight:400;color:#424242;letter-spacing:0.094px;white-space:pre;">Lets take this offline,</div>
<div style="position:absolute;left:858.50px;top:420.45px;font-size:9.5px;line-height:1;font-weight:700;color:#c4314b;letter-spacing:0.062px;white-space:pre;">Amanda.</div>
<div style="position:absolute;left:728px;top:443px;width:424px;height:1px;background:#f2f2f2;"></div>
<div style="position:absolute;left:732px;top:457px;width:26px;height:26px;border-radius:50%;background:radial-gradient(circle at 55% 55%,#c89a80 0,#b08068 22%,#2a3040 42%,#7a8aa0 62%,#d8e0e8 80%);"></div>
<div style="position:absolute;left:748px;top:473.5px;width:11px;height:11px;background:#e0503c;border-radius:50%;border:1px solid #fff;box-sizing:border-box;"></div>
<div style="position:absolute;left:768.00px;top:460.45px;font-size:9.5px;line-height:1;font-weight:700;color:#242424;letter-spacing:-0.213px;white-space:pre;">Bruno Zhao</div>
<div style="position:absolute;left:822.60px;top:460.45px;font-size:9.5px;line-height:1;font-weight:400;color:#8a8a8a;letter-spacing:0.256px;white-space:pre;">mentioned you</div>
<div style="position:absolute;left:894.00px;top:460.45px;font-size:9.5px;line-height:1;font-weight:400;color:#8a8a8a;letter-spacing:-1.172px;white-space:pre;">·</div>
<div style="position:absolute;left:900.00px;top:460.45px;font-size:9.5px;line-height:1;font-weight:400;color:#8a8a8a;letter-spacing:-0.045px;white-space:pre;">08:20</div>
<div style="position:absolute;left:768.00px;top:478.45px;font-size:9.5px;line-height:1;font-weight:400;color:#424242;letter-spacing:0.135px;white-space:pre;">We read through the research from</div>
<div style="position:absolute;left:923.30px;top:478.45px;font-size:9.5px;line-height:1;font-weight:700;color:#c4314b;letter-spacing:0.183px;white-space:pre;">Amanda</div>
<div style="position:absolute;left:962.50px;top:478.45px;font-size:9.5px;line-height:1;font-weight:400;color:#424242;letter-spacing:0.137px;white-space:pre;">, we also read through a bunch of stuff that</div>
<div style="position:absolute;left:768.00px;top:491.45px;font-size:9.5px;line-height:1;font-weight:400;color:#424242;letter-spacing:0.196px;white-space:pre;">came from the other product team.</div>
<div style="position:absolute;left:84.5px;top:511px;width:93px;height:25px;background:#e6e6e6;border-radius:13px;"></div>
<svg style="position:absolute;left:100px;top:518px;" width="12" height="11" viewBox="0 0 12 11"><circle cx="4" cy="3" r="2.3" stroke="#424242" stroke-width="1" fill="none"/><circle cx="9" cy="4" r="1.8" stroke="#424242" stroke-width="1" fill="none"/><path d="M0.8 10.5 V8.5 Q0.8 6.5 3 6.5 H5 Q7.2 6.5 7.2 8.5 V10.5 Z M8 7 H10 Q11.2 7 11.2 8.2 V9.8 H8" stroke="#424242" stroke-width="1" fill="none"/></svg>
<div style="position:absolute;left:116.00px;top:518.98px;font-size:11px;line-height:1;font-weight:400;color:#424242;letter-spacing:-0.255px;white-space:pre;">Speakers</div>
<div style="position:absolute;left:184.5px;top:511px;width:78.5px;height:25px;background:#5b5fc7;border-radius:13px;"></div>
<svg style="position:absolute;left:200.5px;top:518px;" width="10" height="11" viewBox="0 0 10 11"><path d="M3.5 0.5 L2.5 10.5 M7.5 0.5 L6.5 10.5 M0.5 3.5 H9.5 M0 7.3 H9" stroke="#fff" stroke-width="1.2" fill="none"/></svg>
<div style="position:absolute;left:216.00px;top:518.98px;font-size:11px;line-height:1;font-weight:400;color:#fff;letter-spacing:-0.237px;white-space:pre;">Topics</div>
<div style="position:absolute;left:270.5px;top:511px;width:91.5px;height:25px;background:#e6e6e6;border-radius:13px;"></div>
<svg style="position:absolute;left:286px;top:519px;" width="10" height="9" viewBox="0 0 10 9"><path d="M0 1 H9 M0 4.3 H9 M0 7.6 H6" stroke="#424242" stroke-width="1" fill="none"/></svg>
<div style="position:absolute;left:300.75px;top:518.98px;font-size:11px;line-height:1;font-weight:400;color:#424242;letter-spacing:0.016px;white-space:pre;">Chapters</div>
<div style="position:absolute;left:91px;top:552.8px;width:81.5px;height:3.6px;background:#c4394a;border-radius:2px;"></div>
<div style="position:absolute;left:173.75px;top:552.8px;width:50.75px;height:3.6px;background:#2a8ac8;border-radius:2px;"></div>
<div style="position:absolute;left:225.5px;top:552.8px;width:50.5px;height:3.6px;background:#4f8f2a;border-radius:2px;"></div>
<div style="position:absolute;left:278px;top:552.8px;width:119.5px;height:3.6px;background:#c8642a;border-radius:2px;"></div>
<div style="position:absolute;left:399px;top:552.8px;width:26px;height:3.6px;background:#2a9aa8;border-radius:2px;"></div>
<div style="position:absolute;left:427px;top:552.8px;width:88.5px;height:3.6px;background:#5b5fc7;border-radius:2px;"></div>
<div style="position:absolute;left:516.6px;top:552.8px;width:65.39999999999998px;height:3.6px;background:#d62e96;border-radius:2px;"></div>
<div style="position:absolute;left:584px;top:552.8px;width:108.39999999999998px;height:3.6px;background:#0e5a6e;border-radius:2px;"></div>
<div style="position:absolute;left:85px;top:572.5px;width:134.5px;height:21.25px;border:1px solid #e4e4e4;border-radius:3px;box-sizing:border-box;background:#fff;"></div>
<div style="position:absolute;left:95.0px;top:579.925px;width:6px;height:6px;background:#c4394a;border-radius:50%;"></div>
<div style="position:absolute;left:104.50px;top:579.55px;font-size:10px;line-height:1;font-weight:400;color:#424242;letter-spacing:-0.138px;white-space:pre;">Product roadmap review</div>
<div style="position:absolute;left:230px;top:572.5px;width:64.5px;height:21.25px;border:1px solid #e4e4e4;border-radius:3px;box-sizing:border-box;background:#fff;"></div>
<div style="position:absolute;left:241.25px;top:579.925px;width:6px;height:6px;background:#2a7ac0;border-radius:50%;"></div>
<div style="position:absolute;left:250.75px;top:579.55px;font-size:10px;line-height:1;font-weight:400;color:#424242;letter-spacing:-0.447px;white-space:pre;">Agenda</div>
<div style="position:absolute;left:304px;top:572.5px;width:72px;height:21.25px;border:1px solid #e4e4e4;border-radius:3px;box-sizing:border-box;background:#fff;"></div>
<div style="position:absolute;left:314.25px;top:579.925px;width:6px;height:6px;background:#4f8f2a;border-radius:50%;"></div>
<div style="position:absolute;left:323.75px;top:579.55px;font-size:10px;line-height:1;font-weight:400;color:#424242;letter-spacing:-0.196px;white-space:pre;">Our vision</div>
<div style="position:absolute;left:387.5px;top:572.5px;width:130.0px;height:21.25px;border:1px solid #e4e4e4;border-radius:3px;box-sizing:border-box;background:#fff;"></div>
<div style="position:absolute;left:400.0px;top:579.925px;width:6px;height:6px;background:#c8642a;border-radius:50%;"></div>
<div style="position:absolute;left:409.50px;top:579.55px;font-size:10px;line-height:1;font-weight:400;color:#424242;letter-spacing:-0.022px;white-space:pre;">New product roadmap</div>
<div style="position:absolute;left:528px;top:572.5px;width:84px;height:21.25px;border:1px solid #e4e4e4;border-radius:3px;box-sizing:border-box;background:#fff;"></div>
<div style="position:absolute;left:537.5px;top:579.925px;width:6px;height:6px;background:#1a8a90;border-radius:50%;"></div>
<div style="position:absolute;left:547.00px;top:579.55px;font-size:10px;line-height:1;font-weight:400;color:#424242;letter-spacing:-0.060px;white-space:pre;">Product goal</div>
<div style="position:absolute;left:85px;top:605px;width:122.5px;height:22px;border:1px solid #e4e4e4;border-radius:3px;box-sizing:border-box;background:#fff;"></div>
<div style="position:absolute;left:95.0px;top:612.8px;width:6px;height:6px;background:#5b6ad0;border-radius:50%;"></div>
<div style="position:absolute;left:104.50px;top:612.43px;font-size:10px;line-height:1;font-weight:400;color:#424242;letter-spacing:-0.207px;white-space:pre;">Development process</div>
<div style="position:absolute;left:218px;top:605px;width:119px;height:22px;border:1px solid #e4e4e4;border-radius:3px;box-sizing:border-box;background:#fff;"></div>
<div style="position:absolute;left:228.5px;top:612.8px;width:6px;height:6px;background:#c82a96;border-radius:50%;"></div>
<div style="position:absolute;left:238.00px;top:612.43px;font-size:10px;line-height:1;font-weight:400;color:#424242;letter-spacing:-0.031px;white-space:pre;">Monitoring feedback</div>
<div style="position:absolute;left:347.5px;top:605px;width:92.0px;height:22px;border:1px solid #e4e4e4;border-radius:3px;box-sizing:border-box;background:#fff;"></div>
<div style="position:absolute;left:357.5px;top:612.8px;width:6px;height:6px;background:#0e4a5e;border-radius:50%;"></div>
<div style="position:absolute;left:367.00px;top:612.43px;font-size:10px;line-height:1;font-weight:400;color:#424242;letter-spacing:-0.077px;white-space:pre;">Meet the team</div>
</body></html>
